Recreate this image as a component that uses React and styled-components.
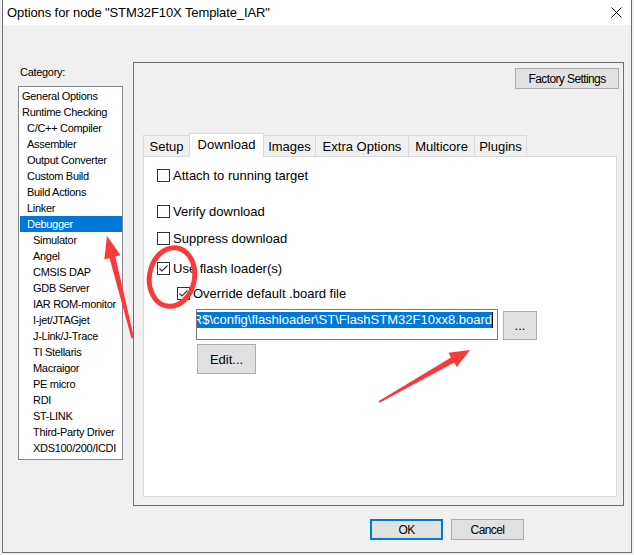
import React from 'react';
import styled, { createGlobalStyle } from 'styled-components';

const Global = createGlobalStyle`
  html, body { margin: 0; padding: 0; background: #f0f0f0; }
  body { width: 634px; height: 555px; overflow: hidden; font-family: "Liberation Sans", Arial, sans-serif; color: #000; }
  * { box-sizing: border-box; }
`;

const Screen = styled.div`
  position: relative;
  width: 634px;
  height: 555px;
  padding-left: 2px;
`;

const Window = styled.div`
  width: 630px;
  height: 553px;
  border: 1px solid #6f6f6f;
  border-top: none;
  background: #f0f0f0;
  display: flex;
  flex-direction: column;
`;

const TitleBar = styled.div`
  height: 25px;
  flex: none;
  background: #fff;
  display: flex;
  align-items: center;
  justify-content: space-between;
  padding: 0 9px 0 4px;
  font-size: 13px;
  letter-spacing: -0.1px;
`;

const Body = styled.div`
  flex: 1;
  display: flex;
  flex-direction: column;
  padding: 37px 7px 12px 15px;
`;

const MainRow = styled.div`
  display: flex;
  gap: 10px;
  height: 444px;
  align-items: flex-start;
`;

const LeftCol = styled.div`
  width: 105px;
  display: flex;
  flex-direction: column;
`;

const CategoryLabel = styled.div`
  font-size: 11px;
  letter-spacing: -0.3px;
  line-height: 14px;
  height: 14px;
  margin: 3px 0 7px 2px;
`;

const ListBox = styled.div`
  height: 374px;
  border: 1px solid #828790;
  background: #fff;
  padding: 1px 0 0 1px;
  display: flex;
  flex-direction: column;
`;

const ListItem = styled.div`
  height: 16px;
  line-height: 16px;
  font-size: 11px;
  letter-spacing: -0.3px;
  white-space: nowrap;
  padding-left: ${p => [2, 7, 13][p.$level]}px;
  background: ${p => (p.$selected ? '#0078d7' : 'transparent')};
  color: ${p => (p.$selected ? '#fff' : '#000')};
`;

const GroupBox = styled.div`
  width: 491px;
  height: 444px;
  border: 1px solid #6d6d6d;
  display: flex;
  flex-direction: column;
  padding: 5px 6px 8px 9px;
`;

const TopBar = styled.div`
  display: flex;
  justify-content: flex-end;
  margin-right: -2px;
`;

const WinButton = styled.button`
  font-family: "Liberation Sans", Arial, sans-serif;
  font-size: ${p => (p.$big ? '13px' : '12px')};
  letter-spacing: ${p => (p.$big ? '0' : '-0.6px')};
  color: #000;
  background: #e1e1e1;
  border: ${p => (p.$default ? '2px solid #0078d7' : '1px solid #adadad')};
  width: ${p => p.$w}px;
  height: ${p => p.$h}px;
  padding: 0;
  margin: 0;
  display: flex;
  align-items: center;
  justify-content: center;
  flex: none;
`;

const TabStrip = styled.div`
  margin-top: 44px;
  height: 23px;
  display: flex;
  align-items: flex-end;
  position: relative;
  z-index: 1;
`;

const Tab = styled.div`
  width: ${p => p.$w}px;
  height: ${p => (p.$active ? 24 : 21)}px;
  margin-left: ${p => (p.$first ? 0 : -1)}px;
  margin-bottom: ${p => (p.$active ? -1 : 0)}px;
  border: 1px solid #d9d9d9;
  border-bottom: none;
  background: ${p => (p.$active ? '#fff' : '#f0f0f0')};
  position: relative;
  z-index: ${p => (p.$active ? 2 : 1)};
  font-size: 13px;
  display: flex;
  align-items: center;
  justify-content: center;
  padding-bottom: ${p => (p.$active ? 2 : 0)}px;
  white-space: nowrap;
`;

const Page = styled.div`
  flex: 1;
  background: #fff;
  border: 1px solid #d9d9d9;
  display: flex;
  flex-direction: column;
`;

const CheckRow = styled.div`
  display: flex;
  align-items: center;
  gap: 3px;
  height: 13px;
  margin-top: ${p => p.$mt}px;
  margin-left: ${p => p.$ml}px;
  font-size: 13px;
  line-height: 13px;
  white-space: nowrap;
`;

const Box = styled.div`
  width: 13px;
  height: 13px;
  border: 1px solid #333;
  background: #fff;
  flex: none;
  display: flex;
  align-items: center;
  justify-content: center;
`;

const FieldRow = styled.div`
  display: flex;
  align-items: flex-start;
  gap: 5px;
  margin-top: 9px;
  margin-left: 52px;
`;

const Field = styled.div`
  width: 302px;
  height: 31px;
  border: 1px solid #7a7a7a;
  background: #fff;
  padding: 2px 4px 0 3px;
  overflow: hidden;
  display: flex;
  justify-content: flex-end;
  align-items: flex-start;
`;

const SelText = styled.span`
  flex: none;
  background: #0078d7;
  color: #fff;
  font-size: 13px;
  line-height: 16px;
  height: 16px;
  white-space: nowrap;
`;

const Caret = styled.span`
  flex: none;
  width: 1px;
  height: 16px;
  background: #000;
`;

const EditWrap = styled.div`
  margin: 4px 0 0 53px;
`;

const Footer = styled.div`
  display: flex;
  justify-content: flex-end;
  gap: 8px;
  margin-top: 13px;
  padding-right: 100px;
`;

const Overlay = styled.svg`
  position: absolute;
  left: 0;
  top: 0;
  width: 634px;
  height: 555px;
  pointer-events: none;
  z-index: 10;
`;

const categories = [
  ['General Options', 0], ['Runtime Checking', 0], ['C/C++ Compiler', 1], ['Assembler', 1],
  ['Output Converter', 1], ['Custom Build', 1], ['Build Actions', 1], ['Linker', 1],
  ['Debugger', 1, true], ['Simulator', 2], ['Angel', 2], ['CMSIS DAP', 2], ['GDB Server', 2],
  ['IAR ROM-monitor', 2], ['I-jet/JTAGjet', 2], ['J-Link/J-Trace', 2], ['TI Stellaris', 2],
  ['Macraigor', 2], ['PE micro', 2], ['RDI', 2], ['ST-LINK', 2], ['Third-Party Driver', 2],
  ['XDS100/200/ICDI', 2],
];

const tabs = [
  ['Setup', 47], ['Download', 75, true], ['Images', 53], ['Extra Options', 94],
  ['Multicore', 67], ['Plugins', 53],
];

const Check = ({ checked }) => (
  <Box>
    {checked && (
      <svg width="11" height="11" viewBox="0 0 11 11">
        <path d="M1.5 5.5 L4 8 L9.5 2.5" fill="none" stroke="#333" strokeWidth="1.1" />
      </svg>
    )}
  </Box>
);

const options = [
  { label: 'Attach to running target', mt: 12, ml: 13 },
  { label: 'Verify download', mt: 23, ml: 13 },
  { label: 'Suppress download', mt: 14, ml: 13 },
  { label: 'Use flash loader(s)', mt: 17, ml: 13, checked: true },
  { label: 'Override default .board file', mt: 12, ml: 33, checked: true },
];

export default function App() {
  return (
    <Screen>
      <Global />
      <Window>
        <TitleBar>
          <span>Options for node "STM32F10X Template_IAR"</span>
          <svg width="11" height="11" viewBox="0 0 11 11">
            <path d="M0.5 0.5 L10.5 10.5 M10.5 0.5 L0.5 10.5" stroke="#000" strokeWidth="1" />
          </svg>
        </TitleBar>
        <Body>
          <MainRow>
            <LeftCol>
              <CategoryLabel>Category:</CategoryLabel>
              <ListBox>
                {categories.map(([name, level, sel]) => (
                  <ListItem key={name} $level={level} $selected={!!sel}>{name}</ListItem>
                ))}
              </ListBox>
            </LeftCol>
            <GroupBox>
              <TopBar>
                <WinButton $w={104} $h={21}>Factory Settings</WinButton>
              </TopBar>
              <TabStrip>
                {tabs.map(([name, w, active], i) => (
                  <Tab key={name} $w={w} $active={!!active} $first={i === 0}>{name}</Tab>
                ))}
              </TabStrip>
              <Page>
                {options.map(o => (
                  <CheckRow key={o.label} $mt={o.mt} $ml={o.ml}>
                    <Check checked={o.checked} />
                    <span>{o.label}</span>
                  </CheckRow>
                ))}
                <FieldRow>
                  <Field>
                    <SelText>$TOOLKIT_DIR$\config\flashloader\ST\FlashSTM32F10xx8.board</SelText>
                    <Caret />
                  </Field>
                  <WinButton $big $w={34} $h={29} style={{ marginTop: 2 }}>...</WinButton>
                </FieldRow>
                <EditWrap>
                  <WinButton $big $w={59} $h={30}>Edit...</WinButton>
                </EditWrap>
              </Page>
            </GroupBox>
          </MainRow>
          <Footer>
            <WinButton $default $w={73} $h={21}>OK</WinButton>
            <WinButton $w={73} $h={21}>Cancel</WinButton>
          </Footer>
        </Body>
      </Window>
      <Overlay viewBox="0 0 634 555">
        <ellipse cx="172" cy="277" rx="22.5" ry="29.5" fill="none" stroke="#f83a3a" strokeWidth="5" transform="rotate(10 172 277)" />
        <polygon fill="#f83a3a" points="107,236 120.5,255.2 115.3,256.5 134,337.8 131.5,338.4 109.5,258 104.3,259.4" />
        <polygon fill="#f83a3a" points="470,350 456.8,367 454.2,362.6 379.6,402.8 378.4,401.2 451,357.4 448.4,352.8" />
      </Overlay>
    </Screen>
  );
}
